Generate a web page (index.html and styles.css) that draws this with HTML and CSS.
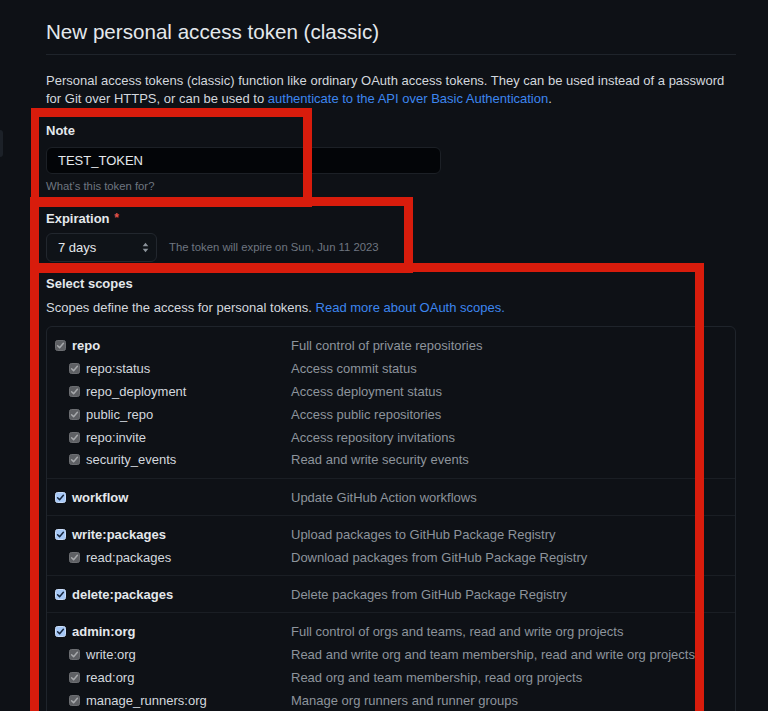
FILE: index.html
```html
<!DOCTYPE html>
<html lang="en">
<head>
<meta charset="utf-8">
<title>New personal access token (classic)</title>
<link rel="stylesheet" href="styles.css">
</head>
<body>
<div class="page">
  <aside class="sidebar"><div class="side-item"></div></aside>
  <main class="content">
    <h1 class="title">New personal access token (classic)</h1>
    <p class="intro"><span>Personal access tokens (classic) function like ordinary OAuth access tokens. They can be used instead of a password</span><br><span>for Git over HTTPS, or can be used to </span><a class="link" href="#">authenticate to the API over Basic Authentication</a><span>.</span></p>

    <div class="field field-note">
      <div class="label">Note</div>
      <div class="input">TEST_TOKEN</div>
      <div class="hint">What’s this token for?</div>
    </div>

    <div class="field field-exp">
      <div class="label">Expiration <span class="req">*</span></div>
      <div class="exp-row">
        <div class="select">
          <span>7 days</span>
          <svg class="sel-icon" width="7" height="11" viewBox="0 0 7 11"><path d="M3.5 0.8 L6.3 4.2 H0.7 Z M3.5 10.2 L6.3 6.8 H0.7 Z" fill="#8b929a"/></svg>
        </div>
        <span class="hint">The token will expire on Sun, Jun 11 2023</span>
      </div>
    </div>

    <div class="field field-scopes">
      <div class="label">Select scopes</div>
      <p class="scopes-desc"><span>Scopes define the access for personal tokens. </span><a class="link" href="#">Read more about OAuth scopes.</a></p>
      <div class="scopes">
        <div class="group">
          <div class="row"><span class="cell"><span class="cb cb-grey"><svg viewBox="0 0 11 11"><path d="M2.6 5.7 L4.6 7.7 L8.4 3.3"/></svg></span><span class="name">repo</span></span><span class="desc">Full control of private repositories</span></div>
          <div class="row sub"><span class="cell"><span class="cb cb-grey"><svg viewBox="0 0 11 11"><path d="M2.6 5.7 L4.6 7.7 L8.4 3.3"/></svg></span><span class="sname">repo:status</span></span><span class="desc">Access commit status</span></div>
          <div class="row sub"><span class="cell"><span class="cb cb-grey"><svg viewBox="0 0 11 11"><path d="M2.6 5.7 L4.6 7.7 L8.4 3.3"/></svg></span><span class="sname">repo_deployment</span></span><span class="desc">Access deployment status</span></div>
          <div class="row sub"><span class="cell"><span class="cb cb-grey"><svg viewBox="0 0 11 11"><path d="M2.6 5.7 L4.6 7.7 L8.4 3.3"/></svg></span><span class="sname">public_repo</span></span><span class="desc">Access public repositories</span></div>
          <div class="row sub"><span class="cell"><span class="cb cb-grey"><svg viewBox="0 0 11 11"><path d="M2.6 5.7 L4.6 7.7 L8.4 3.3"/></svg></span><span class="sname">repo:invite</span></span><span class="desc">Access repository invitations</span></div>
          <div class="row sub"><span class="cell"><span class="cb cb-grey"><svg viewBox="0 0 11 11"><path d="M2.6 5.7 L4.6 7.7 L8.4 3.3"/></svg></span><span class="sname">security_events</span></span><span class="desc">Read and write security events</span></div>
        </div>
        <div class="group">
          <div class="row"><span class="cell"><span class="cb cb-blue"><svg viewBox="0 0 11 11"><path d="M2.6 5.7 L4.6 7.7 L8.4 3.3"/></svg></span><span class="name">workflow</span></span><span class="desc">Update GitHub Action workflows</span></div>
        </div>
        <div class="group">
          <div class="row"><span class="cell"><span class="cb cb-blue"><svg viewBox="0 0 11 11"><path d="M2.6 5.7 L4.6 7.7 L8.4 3.3"/></svg></span><span class="name">write:packages</span></span><span class="desc">Upload packages to GitHub Package Registry</span></div>
          <div class="row sub"><span class="cell"><span class="cb cb-grey"><svg viewBox="0 0 11 11"><path d="M2.6 5.7 L4.6 7.7 L8.4 3.3"/></svg></span><span class="sname">read:packages</span></span><span class="desc">Download packages from GitHub Package Registry</span></div>
        </div>
        <div class="group">
          <div class="row"><span class="cell"><span class="cb cb-blue"><svg viewBox="0 0 11 11"><path d="M2.6 5.7 L4.6 7.7 L8.4 3.3"/></svg></span><span class="name">delete:packages</span></span><span class="desc">Delete packages from GitHub Package Registry</span></div>
        </div>
        <div class="group">
          <div class="row"><span class="cell"><span class="cb cb-blue"><svg viewBox="0 0 11 11"><path d="M2.6 5.7 L4.6 7.7 L8.4 3.3"/></svg></span><span class="name">admin:org</span></span><span class="desc">Full control of orgs and teams, read and write org projects</span></div>
          <div class="row sub"><span class="cell"><span class="cb cb-grey"><svg viewBox="0 0 11 11"><path d="M2.6 5.7 L4.6 7.7 L8.4 3.3"/></svg></span><span class="sname">write:org</span></span><span class="desc">Read and write org and team membership, read and write org projects</span></div>
          <div class="row sub"><span class="cell"><span class="cb cb-grey"><svg viewBox="0 0 11 11"><path d="M2.6 5.7 L4.6 7.7 L8.4 3.3"/></svg></span><span class="sname">read:org</span></span><span class="desc">Read org and team membership, read org projects</span></div>
          <div class="row sub"><span class="cell"><span class="cb cb-grey"><svg viewBox="0 0 11 11"><path d="M2.6 5.7 L4.6 7.7 L8.4 3.3"/></svg></span><span class="sname">manage_runners:org</span></span><span class="desc">Manage org runners and runner groups</span></div>
        </div>
      </div>
    </div>
  </main>

  <div class="mark mark-note"></div>
  <div class="mark mark-exp"></div>
  <div class="mark mark-scopes"></div>
</div>
</body>
</html>
```

FILE: styles.css
```css
html, body {
  margin: 0;
  padding: 0;
  height: 711px;
  overflow: hidden;
  background: #0e1116;
}

body {
  font-family: "Liberation Sans", Arial, sans-serif;
  font-size: 13px;
  color: #d3d8de;
}

.page {
  position: relative;
  display: flex;
  min-height: 711px;
}

.sidebar {
  width: 46px;
  flex: none;
  padding-top: 130px;
  box-sizing: border-box;
}

.side-item {
  width: 3px;
  height: 27px;
  background: #1c2128;
  border-radius: 0 4px 4px 0;
}

.content {
  width: 690px;
  flex: none;
  padding-top: 19px;
}

.title {
  margin: 0;
  font-size: 20.6px;
  font-weight: 400;
  line-height: 26px;
  color: #e4e8ec;
  padding-bottom: 9px;
  border-bottom: 1px solid #1f242b;
}

.intro {
  margin: 16.5px 0 0;
  line-height: 18.5px;
  color: #d3d8de;
  white-space: nowrap;
}

.link {
  color: #3d86ef;
  text-decoration: none;
}

.field {
  display: flex;
  flex-direction: column;
  align-items: flex-start;
}

.field-note {
  margin-top: 13px;
}

.field-exp {
  margin-top: 15px;
}

.field-scopes {
  margin-top: 13px;
  align-items: stretch;
}

.label {
  font-weight: 700;
  line-height: 18px;
  color: #e4e8ec;
}

.req {
  color: #e5534b;
  font-size: 12px;
  vertical-align: 1px;
  margin-left: 1px;
}

.input {
  margin-top: 7px;
  width: 395px;
  height: 27px;
  box-sizing: border-box;
  padding: 0 11px;
  display: flex;
  align-items: center;
  background: #030508;
  border: 1px solid #1c2026;
  border-radius: 6px;
  color: #e4e8ec;
}

.hint {
  font-size: 11.3px;
  line-height: 16px;
  color: #6f7680;
}

.field-note .hint {
  margin-top: 4px;
}

.exp-row {
  margin-top: 5px;
  display: flex;
  align-items: center;
  gap: 12px;
}

.select {
  width: 111px;
  height: 29px;
  box-sizing: border-box;
  padding: 0 7px 0 11px;
  display: flex;
  align-items: center;
  justify-content: space-between;
  border: 1px solid #22272e;
  border-radius: 6px;
  background: #0f1318;
  color: #e4e8ec;
}

.scopes-desc {
  margin: 6px 0 0;
  line-height: 18px;
  color: #d3d8de;
}

.scopes {
  margin-top: 9px;
  border: 1px solid #1f242b;
  border-radius: 6px;
}

.group {
  padding: 7px 8px 6.5px;
  border-top: 1px solid #1a1e24;
}

.group:first-child {
  border-top: 0;
  padding-top: 8px;
}

.row {
  display: grid;
  grid-template-columns: 236px 1fr;
  align-items: center;
  height: 22.8px;
}

.cell {
  display: flex;
  align-items: center;
  gap: 6px;
}

.row.sub .cell {
  padding-left: 14px;
}

.cb {
  width: 11px;
  height: 11px;
  box-sizing: border-box;
  border-radius: 2.5px;
  flex: none;
  display: flex;
}

.cb svg {
  width: 11px;
  height: 11px;
  margin: -1px;
}

.cb path {
  fill: none;
  stroke-width: 1.5;
  stroke-linecap: round;
  stroke-linejoin: round;
}

.cb-grey {
  background: #5e6064;
  border: 1px solid #6c6e72;
}

.cb-grey path {
  stroke: #a7a9ac;
}

.cb-blue {
  background: #a6c8f6;
  border: 1px solid #c9dcf8;
}

.cb-blue path {
  stroke: #16263d;
}

.name {
  font-weight: 700;
  color: #e4e8ec;
}

.sname {
  color: #d3d8de;
}

.desc {
  color: #8d949c;
  white-space: nowrap;
}

.mark {
  position: absolute;
  box-sizing: border-box;
  border: 9px solid #d81c0c;
  pointer-events: none;
}

.mark-note {
  left: 31px;
  top: 108px;
  width: 281px;
  height: 99px;
  border-left-width: 8px;
}

.mark-exp {
  left: 30px;
  top: 197px;
  width: 383px;
  height: 76px;
}

.mark-scopes {
  left: 30px;
  top: 263px;
  width: 674px;
  height: 460px;
}
```
